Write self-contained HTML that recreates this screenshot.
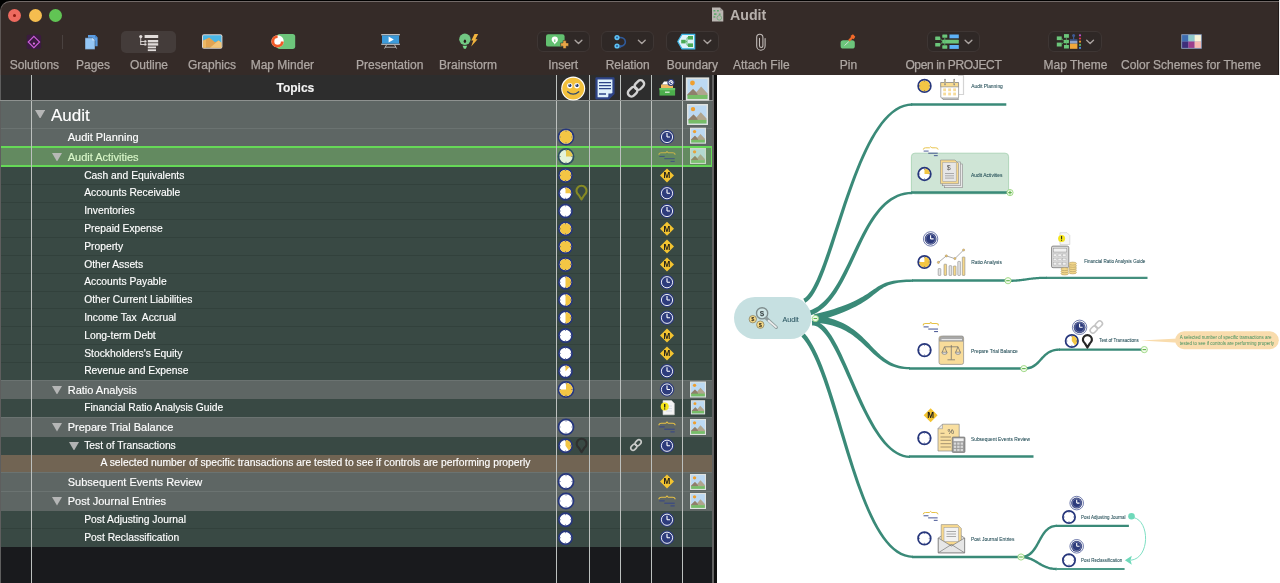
<!DOCTYPE html><html><head><meta charset="utf-8"><style>
*{box-sizing:border-box}
html,body{margin:0;padding:0}
body{width:1280px;height:583px;overflow:hidden;position:relative;background:#352b28;font-family:"Liberation Sans", sans-serif}
.a{position:absolute}
.lbl{position:absolute;top:58.3px;font-size:12px;color:#aea7a3;-webkit-text-stroke:0.25px #aea7a3;white-space:nowrap;line-height:14px}
.row{position:absolute;left:0;width:713px}
.t{position:absolute;white-space:nowrap;color:#fff;line-height:1;-webkit-text-stroke:0.15px currentColor}
.dd{position:absolute;top:31px;height:21px;border:1px solid #3e3634;border-radius:6px;background:#2f2826}

</style></head><body><div class="a" style="left:0;top:0;width:1280px;height:583px;will-change:transform">
<div class="a" style="left:0;top:0;width:1280px;height:75px;background:#000"></div>
<div class="a" style="left:0;top:1px;width:1279px;height:80px;background:#352b28;border-radius:10px 0 0 0;border-top:1px solid #726a68;border-left:1px solid #5f5856"></div>
<div class="a" style="left:1278px;top:2px;width:1px;height:73px;background:#221b19"></div>
<div class="a" style="left:1279px;top:0;width:1px;height:75px;background:#e9e9e9"></div>
<div class="a" style="left:8.0px;top:8.5px;width:13px;height:13px;border-radius:50%;background:#ee6a5f"></div>
<div class="a" style="left:28.5px;top:8.5px;width:13px;height:13px;border-radius:50%;background:#f5bd4f"></div>
<div class="a" style="left:49.0px;top:8.5px;width:13px;height:13px;border-radius:50%;background:#61c454"></div>
<div class="a" style="left:12.5px;top:13.5px;width:3px;height:3px;border-radius:50%;background:#8c1a10"></div>
<div class="t" style="left:730px;top:8.4px;font-size:14.2px;font-weight:bold;color:#b8b1ad;-webkit-text-stroke:0">Audit</div>
<div class="lbl" style="left:9.7px">Solutions</div>
<div class="lbl" style="left:76px">Pages</div>
<div class="lbl" style="left:130px">Outline</div>
<div class="lbl" style="left:188px">Graphics</div>
<div class="lbl" style="left:250.7px">Map Minder</div>
<div class="lbl" style="left:356px">Presentation</div>
<div class="lbl" style="left:439px">Brainstorm</div>
<div class="lbl" style="left:548.2px">Insert</div>
<div class="lbl" style="left:605.7px">Relation</div>
<div class="lbl" style="left:666.7px">Boundary</div>
<div class="lbl" style="left:733px">Attach File</div>
<div class="lbl" style="left:839.8px">Pin</div>
<div class="lbl" style="left:1121px">Color Schemes for Theme</div>
<div class="lbl" style="left:1043.5px">Map Theme</div>
<div class="lbl" style="left:905.4px;letter-spacing:-0.36px">Open in PROJECT</div>
<div class="a" style="left:121px;top:31px;width:55px;height:22px;border-radius:5px;background:#443c3a"></div>
<div class="a" style="left:62px;top:35px;width:1px;height:14px;background:#4a4240"></div>
<div class="dd" style="left:537px;width:53px"></div>
<div class="dd" style="left:600.7px;width:53.0px"></div>
<div class="dd" style="left:666.2px;width:52.5px"></div>
<div class="dd" style="left:927px;width:53.39999999999998px"></div>
<div class="dd" style="left:1048.4px;width:53.5px"></div>
<svg class="a" style="left:0;top:0" width="1280" height="75" viewBox="0 0 1280 75"><path d="M712 7.5H720L723.3 10.8V21.5H712Z" fill="#bcb7b3"/><path d="M720 7.5V10.8H723.3" fill="#9d9894"/><rect x="713.5" y="10" width="1.8" height="1.5" fill="#5ea86a"/><rect x="717" y="10" width="1.8" height="1.5" fill="#5ea86a"/><rect x="714" y="13.3" width="2.5" height="1.6" fill="#5ea86a"/><rect x="718.8" y="13.5" width="1.8" height="1.4" fill="#5ea86a"/><rect x="713.5" y="16.2" width="1.8" height="1.5" fill="#5ea86a"/><circle cx="719.3" cy="17.8" r="2.3" fill="none" stroke="#6aa874" stroke-width="0.8"/><rect x="26.7" y="34.8" width="14.4" height="14.3" rx="1.8" fill="#3b1b40"/><path d="M33.9 36.3L39.6 42L33.9 47.7L28.2 42Z" fill="none" stroke="#cf5fdc" stroke-width="1.1"/><circle cx="33.9" cy="43.6" r="1.1" fill="#e070ea"/><path d="M88 35H95L97.6 37.6V46.3H88Z" fill="#5a9ce2"/><path d="M95 35V37.6H97.6" fill="#3f7cc0"/><path d="M85 37.8H92.2L95 40.6V49.4H85Z" fill="#94c7f6" stroke="#2a2220" stroke-width="0.4"/><path d="M92.2 37.8V40.6H95" fill="#c9e2fa"/><g fill="#e1dcda"><circle cx="140.8" cy="36.6" r="1.6"/><rect x="144.6" y="35" width="13.6" height="3"/><rect x="140.3" y="37" width="0.9" height="7.6"/><rect x="140.3" y="41" width="4" height="0.9"/><rect x="140.3" y="44" width="4" height="0.9"/><circle cx="145.3" cy="41.4" r="1.2"/><circle cx="145.3" cy="44.4" r="1.2"/><rect x="147.8" y="40" width="10.4" height="2.4"/><rect x="147.8" y="43.2" width="10.4" height="2.4"/><rect x="147.8" y="46.5" width="8.2" height="1.8"/><rect x="147.8" y="49.3" width="8.2" height="1.8"/></g><rect x="202" y="34.2" width="20.4" height="14.6" rx="2" fill="#dcd6d4"/><rect x="203" y="35.2" width="18.4" height="12.6" rx="1" fill="#4bb6e6"/><path d="M203 47.8V40.8L209.2 37.6L215 42.2L218.6 40.5L221.4 42.8V47.8Z" fill="#e2a452"/><path d="M210 47.8L218.6 40.5L221.4 42.8V47.8Z" fill="#f2c57a"/><path d="M203 47.8V40.8L206 39.4V47.8Z" fill="#edb865"/><rect x="277" y="34" width="18.2" height="14.9" rx="2.6" fill="#6dc57b"/><circle cx="277.6" cy="41.4" r="6.2" fill="#fff"/><path d="M277.6 35.2A6.2 6.2 0 1 0 283.8 41.4H280.9A3.3 3.3 0 1 1 277.6 38.1Z" fill="#f05a28"/><path d="M277.6 35.2V38.1A3.3 3.3 0 0 1 280.9 41.4H283.8" fill="none"/><rect x="381.2" y="34" width="18.7" height="1.4" fill="#bdbdbd"/><rect x="381.2" y="43.6" width="18.7" height="1.3" fill="#bdbdbd"/><rect x="382" y="35.4" width="17.1" height="8.2" fill="#3c9bdb"/><path d="M388.6 36.6L393.8 39.5L388.6 42.4Z" fill="#fff"/><path d="M386.5 44.9L384.5 48.6M394.6 44.9L396.6 48.6M385.2 47.2H395.9" stroke="#bdbdbd" stroke-width="0.9" fill="none"/><circle cx="464.9" cy="39.3" r="5.7" fill="#72c883"/><ellipse cx="464.9" cy="41.3" rx="1.2" ry="1.7" fill="#2a1a1a"/><path d="M462.6 45.8H467.2L465.9 48.8H463.9Z" fill="#78d88a"/><path d="M474.5 34H478.2L475.4 39.2H477.6L471.2 46.4L473.3 40.6H471.3Z" fill="#f2b43e"/><rect x="546" y="34.3" width="18.6" height="12.3" rx="2.2" fill="#62c070"/><circle cx="554.8" cy="39.6" r="3.1" fill="#fff"/><path d="M553 41.6L554.8 44.6L556.6 41.6Z" fill="#fff"/><rect x="554.3" y="39.4" width="1" height="2.6" fill="#62c070"/><path d="M563 40.6H566.2V42.9H568.6V46.2H566.2V48.6H563V46.2H560.6V42.9H563Z" fill="#e8a546" stroke="#2a2220" stroke-width="0.5"/><path d="M575.1 40.2L578.5 43.4L581.9 40.2" fill="none" stroke="#aaa3a0" stroke-width="1.4" stroke-linecap="round" stroke-linejoin="round"/><path d="M638.4 40.2L641.8 43.4L645.1999999999999 40.2" fill="none" stroke="#aaa3a0" stroke-width="1.4" stroke-linecap="round" stroke-linejoin="round"/><path d="M704.0 40.2L707.4 43.4L710.8 40.2" fill="none" stroke="#aaa3a0" stroke-width="1.4" stroke-linecap="round" stroke-linejoin="round"/><path d="M965.1 40.2L968.5 43.4L971.9 40.2" fill="none" stroke="#aaa3a0" stroke-width="1.4" stroke-linecap="round" stroke-linejoin="round"/><path d="M1086.6999999999998 40.2L1090.1 43.4L1093.5 40.2" fill="none" stroke="#aaa3a0" stroke-width="1.4" stroke-linecap="round" stroke-linejoin="round"/><path d="M619 37.6C626.5 37 627.8 45.5 620.5 46.3" fill="none" stroke="#2f5a9a" stroke-width="1.6"/><path d="M619.2 44.4L622.6 46.2L619.6 48.4Z" fill="#2f5a9a"/><circle cx="617" cy="37.6" r="2.6" fill="#5cc3f4"/><circle cx="617" cy="46" r="2.6" fill="#5cc3f4"/><circle cx="617" cy="37.6" r="1" fill="#2f5a9a"/><circle cx="617" cy="46" r="1" fill="#2f5a9a"/><path d="M682 34.3H694.7V48.8H682L677.8 41.5Z" fill="#dff3fb" stroke="#3fb7e6" stroke-width="1.2"/><rect x="681.2" y="39.8" width="4.5" height="3.6" fill="#4aaa55"/><rect x="688" y="36" width="5" height="3.6" fill="#4aaa55"/><rect x="688" y="43.4" width="5" height="3.6" fill="#4aaa55"/><path d="M685.7 41.6H687V37.8H688M687 41.6V45.2H688" stroke="#4aaa55" stroke-width="0.8" fill="none"/><path d="M759.5 38.2V45.8A1.7 1.7 0 0 0 762.9 45.8V37.3A3.1 3.1 0 0 0 756.7 37.3V46A4.2 4.2 0 0 0 765.1 46V38.5" fill="none" stroke="#c2bcb9" stroke-width="1.1" stroke-linecap="round"/><rect x="840.6" y="40.2" width="14.2" height="8.4" rx="2.6" fill="#6cc57b"/><path d="M844.5 45.5L848.8 41.6" stroke="#e6e6e6" stroke-width="0.8"/><path d="M848.2 40L851.2 36.8L850.4 35.9L853 34.3L855.3 36.7L853.7 39.2L852.8 38.5L849.6 41.5Z" fill="#f26a2a"/><g fill="#6bc67a"><rect x="935.2" y="36.6" width="5" height="3.5" rx="0.5"/><rect x="935.2" y="42.9" width="5" height="3.7" rx="0.5"/><rect x="942.3" y="34.5" width="5" height="3.3" rx="0.5"/><rect x="942.3" y="45.2" width="5" height="3.5" rx="0.5"/><rect x="942.3" y="39.8" width="16.5" height="3.6" rx="0.5"/></g><path d="M940.2 38.4L942.6 41.6L940.2 44.8M944.8 37.8V45.2" stroke="#5ab66a" stroke-width="0.8" fill="none"/><rect x="949.5" y="34.5" width="9.3" height="3.8" fill="#5db2f6"/><rect x="949.5" y="45" width="9.3" height="3.9" fill="#5db2f6"/><g fill="#6bc67a"><rect x="1056.8" y="36.4" width="4.9" height="3.7"/><rect x="1056.8" y="42.6" width="4.9" height="3.9"/><rect x="1064" y="34.1" width="4.9" height="3.7"/><rect x="1064" y="39.9" width="4.9" height="3.3"/><rect x="1064" y="45" width="4.9" height="3.5"/></g><path d="M1061.7 38.3L1064 41.6L1061.7 44.5M1066.4 37.8V45" stroke="#5ab66a" stroke-width="0.7" fill="none"/><circle cx="1073.6" cy="35.6" r="1.5" fill="#3d5a94"/><rect x="1073" y="36" width="1.2" height="3.5" fill="#3d5a94"/><rect x="1070" y="39.3" width="7.4" height="1.5" fill="#3d5a94"/><rect x="1070" y="40.8" width="7.4" height="2.9" fill="#8ea3c8"/><rect x="1070" y="43.7" width="7.4" height="5.1" fill="#f0a83c"/><circle cx="1080" cy="35.3" r="1.1" fill="#c34fd2"/><circle cx="1080" cy="38.5" r="1.1" fill="#e0344c"/><circle cx="1080" cy="41.7" r="1.1" fill="#ee9a2c"/><circle cx="1080" cy="44.9" r="1.1" fill="#5ab86a"/><circle cx="1080" cy="47.9" r="1.1" fill="#4a86dc"/><rect x="1181.3" y="34.3" width="20.4" height="14.4" fill="#9bb2d8"/><rect x="1182.1" y="35.1" width="6.3" height="6.4" fill="#3f6db0"/><rect x="1188.37" y="35.1" width="6.3" height="6.4" fill="#8fc9c9"/><rect x="1194.6399999999999" y="35.1" width="6.3" height="6.4" fill="#f8f3d8"/><rect x="1182.1" y="41.5" width="6.3" height="6.4" fill="#3e2f7a"/><rect x="1188.37" y="41.5" width="6.3" height="6.4" fill="#9b3d8c"/><rect x="1194.6399999999999" y="41.5" width="6.3" height="6.4" fill="#f7b8b0"/></svg>
<div class="a" style="left:0;top:75px;width:717px;height:508px;background:#191a1d"></div>
<div class="a" style="left:0;top:75px;width:713px;height:25px;background:#2d2d2d"></div>
<div class="t" style="left:276.5px;top:82.3px;font-size:12px;font-weight:bold;color:#f2f2f2">Topics</div>
<div class="row" style="top:100px;height:27.5px;background:#5e6664"></div>
<div class="row" style="top:100px;height:1px;background:#6b7371"></div>
<div class="t" style="left:51.0px;top:106.57px;font-size:17px;color:#ffffff">Audit</div>
<svg class="a" style="left:35.3px;top:109.65px" width="10.2" height="8.8" viewBox="0 0 10.2 8.8"><path d="M0 0H10.2L5.1 8.8Z" fill="#bdbdbd" opacity="0.92"/></svg>
<div class="row" style="top:127.5px;height:19.0px;background:#5e6664"></div>
<div class="row" style="top:127.5px;height:1px;background:#6b7371"></div>
<div class="t" style="left:67.7px;top:132.26px;font-size:11.0px;color:#ffffff">Audit Planning</div>
<div class="row" style="top:146.5px;height:20.0px;background:#638a60"></div>
<div class="t" style="left:67.7px;top:151.76px;font-size:11.0px;color:#d9f7c9">Audit Activities</div>
<svg class="a" style="left:52px;top:152.50px" width="10" height="8.6" viewBox="0 0 10 8.6"><path d="M0 0H10L5.0 8.6Z" fill="#bdbdbd" opacity="0.92"/></svg>
<div class="row" style="top:166.5px;height:17.80000000000001px;background:#394944"></div>
<div class="t" style="left:84.2px;top:170.54px;font-size:10.3px;color:#ffffff">Cash and Equivalents</div>
<div class="row" style="top:184.3px;height:17.80000000000001px;background:#394944"></div>
<div class="row" style="top:183.8px;height:1px;background:#32413c"></div>
<div class="t" style="left:84.2px;top:188.34px;font-size:10.3px;color:#ffffff">Accounts Receivable</div>
<div class="row" style="top:202.1px;height:17.80000000000001px;background:#394944"></div>
<div class="row" style="top:201.6px;height:1px;background:#32413c"></div>
<div class="t" style="left:84.2px;top:206.14px;font-size:10.3px;color:#ffffff">Inventories</div>
<div class="row" style="top:219.9px;height:17.80000000000001px;background:#394944"></div>
<div class="row" style="top:219.4px;height:1px;background:#32413c"></div>
<div class="t" style="left:84.2px;top:223.94px;font-size:10.3px;color:#ffffff">Prepaid Expense</div>
<div class="row" style="top:237.7px;height:17.80000000000001px;background:#394944"></div>
<div class="row" style="top:237.2px;height:1px;background:#32413c"></div>
<div class="t" style="left:84.2px;top:241.74px;font-size:10.3px;color:#ffffff">Property</div>
<div class="row" style="top:255.5px;height:17.80000000000001px;background:#394944"></div>
<div class="row" style="top:255.0px;height:1px;background:#32413c"></div>
<div class="t" style="left:84.2px;top:259.54px;font-size:10.3px;color:#ffffff">Other Assets</div>
<div class="row" style="top:273.3px;height:17.80000000000001px;background:#394944"></div>
<div class="row" style="top:272.8px;height:1px;background:#32413c"></div>
<div class="t" style="left:84.2px;top:277.34px;font-size:10.3px;color:#ffffff">Accounts Payable</div>
<div class="row" style="top:291.1px;height:17.80000000000001px;background:#394944"></div>
<div class="row" style="top:290.6px;height:1px;background:#32413c"></div>
<div class="t" style="left:84.2px;top:295.14px;font-size:10.3px;color:#ffffff">Other Current Liabilities</div>
<div class="row" style="top:308.9px;height:17.80000000000001px;background:#394944"></div>
<div class="row" style="top:308.4px;height:1px;background:#32413c"></div>
<div class="t" style="left:84.2px;top:312.94px;font-size:10.3px;color:#ffffff">Income Tax&nbsp; Accrual</div>
<div class="row" style="top:326.70000000000005px;height:17.80000000000001px;background:#394944"></div>
<div class="row" style="top:326.20000000000005px;height:1px;background:#32413c"></div>
<div class="t" style="left:84.2px;top:330.74px;font-size:10.3px;color:#ffffff">Long-term Debt</div>
<div class="row" style="top:344.5px;height:17.80000000000001px;background:#394944"></div>
<div class="row" style="top:344.0px;height:1px;background:#32413c"></div>
<div class="t" style="left:84.2px;top:348.54px;font-size:10.3px;color:#ffffff">Stockholders's Equity</div>
<div class="row" style="top:362.3px;height:17.80000000000001px;background:#394944"></div>
<div class="row" style="top:361.8px;height:1px;background:#32413c"></div>
<div class="t" style="left:84.2px;top:366.34px;font-size:10.3px;color:#ffffff">Revenue and Expense</div>
<div class="row" style="top:380px;height:19px;background:#5e6664"></div>
<div class="row" style="top:380px;height:1px;background:#6b7371"></div>
<div class="t" style="left:67.7px;top:384.76px;font-size:11.0px;color:#ffffff">Ratio Analysis</div>
<svg class="a" style="left:52px;top:385.50px" width="10" height="8.6" viewBox="0 0 10 8.6"><path d="M0 0H10L5.0 8.6Z" fill="#bdbdbd" opacity="0.92"/></svg>
<div class="row" style="top:399px;height:18px;background:#394944"></div>
<div class="t" style="left:84.2px;top:403.14px;font-size:10.3px;color:#ffffff">Financial Ratio Analysis Guide</div>
<div class="row" style="top:417px;height:20px;background:#5e6664"></div>
<div class="row" style="top:417px;height:1px;background:#6b7371"></div>
<div class="t" style="left:67.7px;top:422.26px;font-size:11.0px;color:#ffffff">Prepare Trial Balance</div>
<svg class="a" style="left:52px;top:423.00px" width="10" height="8.6" viewBox="0 0 10 8.6"><path d="M0 0H10L5.0 8.6Z" fill="#bdbdbd" opacity="0.92"/></svg>
<div class="row" style="top:437px;height:17.5px;background:#394944"></div>
<div class="t" style="left:84.2px;top:440.89px;font-size:10.3px;color:#ffffff">Test of Transactions</div>
<svg class="a" style="left:68.5px;top:441.75px" width="10" height="8.6" viewBox="0 0 10 8.6"><path d="M0 0H10L5.0 8.6Z" fill="#bdbdbd" opacity="0.92"/></svg>
<div class="row" style="top:454.5px;height:17.5px;background:#716453"></div>
<div class="t" style="left:100.5px;top:458.37px;font-size:10.33px;color:#ffffff">A selected number of specific transactions are tested to see if controls are performing properly</div>
<div class="row" style="top:472px;height:19px;background:#5e6664"></div>
<div class="row" style="top:472px;height:1px;background:#6b7371"></div>
<div class="t" style="left:67.7px;top:476.76px;font-size:11.0px;color:#ffffff">Subsequent Events Review</div>
<div class="row" style="top:491px;height:20px;background:#5e6664"></div>
<div class="row" style="top:491px;height:1px;background:#6b7371"></div>
<div class="t" style="left:67.7px;top:496.26px;font-size:11.0px;color:#ffffff">Post Journal Entries</div>
<svg class="a" style="left:52px;top:497.00px" width="10" height="8.6" viewBox="0 0 10 8.6"><path d="M0 0H10L5.0 8.6Z" fill="#bdbdbd" opacity="0.92"/></svg>
<div class="row" style="top:511px;height:17.5px;background:#394944"></div>
<div class="t" style="left:84.2px;top:514.89px;font-size:10.3px;color:#ffffff">Post Adjusting Journal</div>
<div class="row" style="top:528.5px;height:18.5px;background:#394944"></div>
<div class="row" style="top:528.0px;height:1px;background:#32413c"></div>
<div class="t" style="left:84.2px;top:532.89px;font-size:10.3px;color:#ffffff">Post Reclassification</div>
<div class="a" style="left:0;top:146px;width:713px;height:21px;border:2px solid #66d957;border-left:none"></div>
<div class="a" style="left:31px;top:75px;width:1px;height:508px;background:#bcc0be"></div>
<div class="a" style="left:556px;top:75px;width:1px;height:508px;background:#bcc0be"></div>
<div class="a" style="left:589px;top:75px;width:1px;height:508px;background:#bcc0be"></div>
<div class="a" style="left:620px;top:75px;width:1px;height:508px;background:#bcc0be"></div>
<div class="a" style="left:651px;top:75px;width:1px;height:508px;background:#bcc0be"></div>
<div class="a" style="left:682px;top:75px;width:1px;height:508px;background:#bcc0be"></div>
<div class="a" style="left:712px;top:75px;width:2px;height:508px;background:#626262"></div>
<div class="a" style="left:714px;top:75px;width:3px;height:508px;background:#0f0f0f"></div>
<div class="a" style="left:0;top:75px;width:1px;height:508px;background:#5e5e5e"></div>
<div class="a" style="left:0;top:100px;width:713px;height:1px;background:#8e9290"></div>
<svg class="a" style="left:0;top:0" width="1280" height="583" viewBox="0 0 1280 583"><circle cx="566" cy="137.0" r="7.53" fill="#ffffff" stroke="#27377c" stroke-width="1.75"/><circle cx="566" cy="137.0" r="6.65" fill="#f3c644"/><path d="M566 130.35v1.33M566 143.65v-1.33M559.35 137.0h1.33M572.65 137.0h-1.33" stroke="#27377c" stroke-width="0.8" opacity="0.75"/><circle cx="566" cy="156.5" r="7.53" fill="#e3f3d8" stroke="#2e4f62" stroke-width="1.75"/><path d="M566 156.5V149.85A6.65 6.65 0 0 1 572.65 156.50Z" fill="#e5c84a"/><path d="M566 149.85v1.33M566 163.15v-1.33M559.35 156.5h1.33M572.65 156.5h-1.33" stroke="#2e4f62" stroke-width="0.8" opacity="0.75"/><circle cx="565.5" cy="175.4" r="6.62" fill="#ffffff" stroke="#27377c" stroke-width="1.75"/><circle cx="565.5" cy="175.4" r="5.75" fill="#f3c644"/><path d="M565.5 169.65v1.15M565.5 181.15v-1.15M559.75 175.4h1.15M571.25 175.4h-1.15" stroke="#27377c" stroke-width="0.8" opacity="0.75"/><circle cx="565.5" cy="193.20000000000002" r="6.62" fill="#ffffff" stroke="#27377c" stroke-width="1.75"/><path d="M565.5 193.20000000000002V187.45A5.75 5.75 0 0 1 571.25 193.20Z" fill="#f3c644"/><path d="M565.5 187.45v1.15M565.5 198.95v-1.15M559.75 193.20000000000002h1.15M571.25 193.20000000000002h-1.15" stroke="#27377c" stroke-width="0.8" opacity="0.75"/><circle cx="565.5" cy="211.0" r="6.62" fill="#ffffff" stroke="#27377c" stroke-width="1.75"/><path d="M565.5 205.25v1.15M565.5 216.75v-1.15M559.75 211.0h1.15M571.25 211.0h-1.15" stroke="#27377c" stroke-width="0.8" opacity="0.75"/><circle cx="565.5" cy="228.8" r="6.62" fill="#ffffff" stroke="#27377c" stroke-width="1.75"/><circle cx="565.5" cy="228.8" r="5.75" fill="#f3c644"/><path d="M565.5 223.05v1.15M565.5 234.55v-1.15M559.75 228.8h1.15M571.25 228.8h-1.15" stroke="#27377c" stroke-width="0.8" opacity="0.75"/><circle cx="565.5" cy="246.6" r="6.62" fill="#ffffff" stroke="#27377c" stroke-width="1.75"/><circle cx="565.5" cy="246.6" r="5.75" fill="#f3c644"/><path d="M565.5 240.85v1.15M565.5 252.35v-1.15M559.75 246.6h1.15M571.25 246.6h-1.15" stroke="#27377c" stroke-width="0.8" opacity="0.75"/><circle cx="565.5" cy="264.4" r="6.62" fill="#ffffff" stroke="#27377c" stroke-width="1.75"/><circle cx="565.5" cy="264.4" r="5.75" fill="#f3c644"/><path d="M565.5 258.65v1.15M565.5 270.15v-1.15M559.75 264.4h1.15M571.25 264.4h-1.15" stroke="#27377c" stroke-width="0.8" opacity="0.75"/><circle cx="565.5" cy="282.20000000000005" r="6.62" fill="#ffffff" stroke="#27377c" stroke-width="1.75"/><path d="M565.5 282.20000000000005V276.45A5.75 5.75 0 0 1 565.50 287.95Z" fill="#f3c644"/><path d="M565.5 276.45v1.15M565.5 287.95v-1.15M559.75 282.20000000000005h1.15M571.25 282.20000000000005h-1.15" stroke="#27377c" stroke-width="0.8" opacity="0.75"/><circle cx="565.5" cy="300.0" r="6.62" fill="#ffffff" stroke="#27377c" stroke-width="1.75"/><path d="M565.5 300.0V294.25A5.75 5.75 0 0 1 565.50 305.75Z" fill="#f3c644"/><path d="M565.5 294.25v1.15M565.5 305.75v-1.15M559.75 300.0h1.15M571.25 300.0h-1.15" stroke="#27377c" stroke-width="0.8" opacity="0.75"/><circle cx="565.5" cy="317.79999999999995" r="6.62" fill="#ffffff" stroke="#27377c" stroke-width="1.75"/><path d="M565.5 317.79999999999995V312.05A5.75 5.75 0 0 1 565.50 323.55Z" fill="#f3c644"/><path d="M565.5 312.05v1.15M565.5 323.55v-1.15M559.75 317.79999999999995h1.15M571.25 317.79999999999995h-1.15" stroke="#27377c" stroke-width="0.8" opacity="0.75"/><circle cx="565.5" cy="335.6" r="6.62" fill="#ffffff" stroke="#27377c" stroke-width="1.75"/><path d="M565.5 329.85v1.15M565.5 341.35v-1.15M559.75 335.6h1.15M571.25 335.6h-1.15" stroke="#27377c" stroke-width="0.8" opacity="0.75"/><circle cx="565.5" cy="353.4" r="6.62" fill="#ffffff" stroke="#27377c" stroke-width="1.75"/><path d="M565.5 347.65v1.15M565.5 359.15v-1.15M559.75 353.4h1.15M571.25 353.4h-1.15" stroke="#27377c" stroke-width="0.8" opacity="0.75"/><circle cx="565.5" cy="371.20000000000005" r="6.62" fill="#ffffff" stroke="#27377c" stroke-width="1.75"/><path d="M565.5 371.20000000000005V365.45A5.75 5.75 0 0 1 569.44 367.01Z" fill="#f3c644"/><path d="M565.5 365.45v1.15M565.5 376.95v-1.15M559.75 371.20000000000005h1.15M571.25 371.20000000000005h-1.15" stroke="#27377c" stroke-width="0.8" opacity="0.75"/><circle cx="566" cy="389.5" r="7.53" fill="#ffffff" stroke="#27377c" stroke-width="1.75"/><path d="M566 389.5V382.85A6.65 6.65 0 1 1 559.35 389.50Z" fill="#f3c644"/><path d="M566 382.85v1.33M566 396.15v-1.33M559.35 389.5h1.33M572.65 389.5h-1.33" stroke="#27377c" stroke-width="0.8" opacity="0.75"/><circle cx="566" cy="427.0" r="7.53" fill="#ffffff" stroke="#27377c" stroke-width="1.75"/><path d="M566 420.35v1.33M566 433.65v-1.33M559.35 427.0h1.33M572.65 427.0h-1.33" stroke="#27377c" stroke-width="0.8" opacity="0.75"/><circle cx="565.5" cy="445.75" r="6.62" fill="#ffffff" stroke="#27377c" stroke-width="1.75"/><path d="M565.5 445.75V440.00A5.75 5.75 0 0 1 568.88 450.40Z" fill="#f3c644"/><path d="M565.5 440.00v1.15M565.5 451.50v-1.15M559.75 445.75h1.15M571.25 445.75h-1.15" stroke="#27377c" stroke-width="0.8" opacity="0.75"/><circle cx="566" cy="481.5" r="7.53" fill="#ffffff" stroke="#27377c" stroke-width="1.75"/><path d="M566 474.85v1.33M566 488.15v-1.33M559.35 481.5h1.33M572.65 481.5h-1.33" stroke="#27377c" stroke-width="0.8" opacity="0.75"/><circle cx="566" cy="501.0" r="7.53" fill="#ffffff" stroke="#27377c" stroke-width="1.75"/><path d="M566 494.35v1.33M566 507.65v-1.33M559.35 501.0h1.33M572.65 501.0h-1.33" stroke="#27377c" stroke-width="0.8" opacity="0.75"/><circle cx="565.5" cy="519.75" r="6.62" fill="#ffffff" stroke="#27377c" stroke-width="1.75"/><path d="M565.5 514.00v1.15M565.5 525.50v-1.15M559.75 519.75h1.15M571.25 519.75h-1.15" stroke="#27377c" stroke-width="0.8" opacity="0.75"/><circle cx="565.5" cy="537.75" r="6.62" fill="#ffffff" stroke="#27377c" stroke-width="1.75"/><path d="M565.5 532.00v1.15M565.5 543.50v-1.15M559.75 537.75h1.15M571.25 537.75h-1.15" stroke="#27377c" stroke-width="0.8" opacity="0.75"/><circle cx="667" cy="137.0" r="7.20" fill="#2d3b7c"/><circle cx="667" cy="137.0" r="5.60" fill="none" stroke="#ffffff" stroke-width="0.9"/><path d="M667 137.0V133.04M667 137.0H670.02" stroke="#ffffff" stroke-width="1.1" fill="none"/><g opacity="0.75"><path d="M658.9 154.80Q658.9 152.80 661.40 152.80H665.70L667.00 151.60L668.30 152.80H672.60Q675.10 152.80 675.10 154.80" fill="none" stroke="#e7c144" stroke-width="1.10"/><path d="M659.30 156.40H664.70M664.30 158.70H674.70M670.50 161.40H674.70" stroke="#34448a" stroke-width="1.00" fill="none"/></g><path d="M667 168.4L674 175.4L667 182.4L660 175.4Z" fill="#f4c430"/><text x="667" y="178.35" font-size="8.20" font-weight="bold" text-anchor="middle" fill="#1a1a1a" font-family="Liberation Sans">M</text><circle cx="667" cy="193.20000000000002" r="7.20" fill="#2d3b7c"/><circle cx="667" cy="193.20000000000002" r="5.60" fill="none" stroke="#ffffff" stroke-width="0.9"/><path d="M667 193.20000000000002V189.24M667 193.20000000000002H670.02" stroke="#ffffff" stroke-width="1.1" fill="none"/><circle cx="667" cy="211.0" r="7.20" fill="#2d3b7c"/><circle cx="667" cy="211.0" r="5.60" fill="none" stroke="#ffffff" stroke-width="0.9"/><path d="M667 211.0V207.04M667 211.0H670.02" stroke="#ffffff" stroke-width="1.1" fill="none"/><path d="M667 221.8L674 228.8L667 235.8L660 228.8Z" fill="#f4c430"/><text x="667" y="231.75" font-size="8.20" font-weight="bold" text-anchor="middle" fill="#1a1a1a" font-family="Liberation Sans">M</text><path d="M667 239.6L674 246.6L667 253.6L660 246.6Z" fill="#f4c430"/><text x="667" y="249.55" font-size="8.20" font-weight="bold" text-anchor="middle" fill="#1a1a1a" font-family="Liberation Sans">M</text><path d="M667 257.4L674 264.4L667 271.4L660 264.4Z" fill="#f4c430"/><text x="667" y="267.35" font-size="8.20" font-weight="bold" text-anchor="middle" fill="#1a1a1a" font-family="Liberation Sans">M</text><circle cx="667" cy="282.20000000000005" r="7.20" fill="#2d3b7c"/><circle cx="667" cy="282.20000000000005" r="5.60" fill="none" stroke="#ffffff" stroke-width="0.9"/><path d="M667 282.20000000000005V278.24M667 282.20000000000005H670.02" stroke="#ffffff" stroke-width="1.1" fill="none"/><circle cx="667" cy="300.0" r="7.20" fill="#2d3b7c"/><circle cx="667" cy="300.0" r="5.60" fill="none" stroke="#ffffff" stroke-width="0.9"/><path d="M667 300.0V296.04M667 300.0H670.02" stroke="#ffffff" stroke-width="1.1" fill="none"/><circle cx="667" cy="317.79999999999995" r="7.20" fill="#2d3b7c"/><circle cx="667" cy="317.79999999999995" r="5.60" fill="none" stroke="#ffffff" stroke-width="0.9"/><path d="M667 317.79999999999995V313.84M667 317.79999999999995H670.02" stroke="#ffffff" stroke-width="1.1" fill="none"/><path d="M667 328.6L674 335.6L667 342.6L660 335.6Z" fill="#f4c430"/><text x="667" y="338.55" font-size="8.20" font-weight="bold" text-anchor="middle" fill="#1a1a1a" font-family="Liberation Sans">M</text><path d="M667 346.4L674 353.4L667 360.4L660 353.4Z" fill="#f4c430"/><text x="667" y="356.35" font-size="8.20" font-weight="bold" text-anchor="middle" fill="#1a1a1a" font-family="Liberation Sans">M</text><circle cx="667" cy="371.20000000000005" r="7.20" fill="#2d3b7c"/><circle cx="667" cy="371.20000000000005" r="5.60" fill="none" stroke="#ffffff" stroke-width="0.9"/><path d="M667 371.20000000000005V367.24M667 371.20000000000005H670.02" stroke="#ffffff" stroke-width="1.1" fill="none"/><circle cx="667" cy="389.5" r="7.20" fill="#2d3b7c"/><circle cx="667" cy="389.5" r="5.60" fill="none" stroke="#ffffff" stroke-width="0.9"/><path d="M667 389.5V385.54M667 389.5H670.02" stroke="#ffffff" stroke-width="1.1" fill="none"/><path d="M663 400.6H671.5L674.3 403.4V414.8H663Z" fill="#f4f4f4" stroke="#d0d0d0" stroke-width="0.6"/><path d="M666 406.0H672M666 408.5H672M666 411.0H672" stroke="#c8d0e0" stroke-width="0.6"/><circle cx="664.7" cy="406.6" r="4" fill="#f6e51a"/><path d="M664.7 404.0V407.6" stroke="#222" stroke-width="1.3"/><circle cx="664.7" cy="408.9" r="0.7" fill="#222"/><g opacity="1"><path d="M658.9 425.30Q658.9 423.30 661.40 423.30H665.70L667.00 422.10L668.30 423.30H672.60Q675.10 423.30 675.10 425.30" fill="none" stroke="#e7c144" stroke-width="1.10"/><path d="M659.30 426.90H664.70M664.30 429.20H674.70M670.50 431.90H674.70" stroke="#34448a" stroke-width="1.00" fill="none"/></g><circle cx="667" cy="445.75" r="7.20" fill="#2d3b7c"/><circle cx="667" cy="445.75" r="5.60" fill="none" stroke="#ffffff" stroke-width="0.9"/><path d="M667 445.75V441.79M667 445.75H670.02" stroke="#ffffff" stroke-width="1.1" fill="none"/><path d="M667 474.5L674 481.5L667 488.5L660 481.5Z" fill="#f4c430"/><text x="667" y="484.45" font-size="8.20" font-weight="bold" text-anchor="middle" fill="#1a1a1a" font-family="Liberation Sans">M</text><g opacity="1"><path d="M658.9 499.30Q658.9 497.30 661.40 497.30H665.70L667.00 496.10L668.30 497.30H672.60Q675.10 497.30 675.10 499.30" fill="none" stroke="#e7c144" stroke-width="1.10"/><path d="M659.30 500.90H664.70M664.30 503.20H674.70M670.50 505.90H674.70" stroke="#34448a" stroke-width="1.00" fill="none"/></g><circle cx="667" cy="519.75" r="7.20" fill="#2d3b7c"/><circle cx="667" cy="519.75" r="5.60" fill="none" stroke="#ffffff" stroke-width="0.9"/><path d="M667 519.75V515.79M667 519.75H670.02" stroke="#ffffff" stroke-width="1.1" fill="none"/><circle cx="667" cy="537.75" r="7.20" fill="#2d3b7c"/><circle cx="667" cy="537.75" r="5.60" fill="none" stroke="#ffffff" stroke-width="0.9"/><path d="M667 537.75V533.79M667 537.75H670.02" stroke="#ffffff" stroke-width="1.1" fill="none"/><rect x="687" y="104" width="21" height="21" fill="#dfe2df"/><rect x="688.47" y="105.47" width="18.06" height="18.06" fill="#bcd9f2"/><circle cx="692.99" cy="109.08" r="2.17" fill="#ef9f2f"/><path d="M688.47 119.56L693.53 114.50L696.60 117.21L700.75 112.33L706.53 118.47V120.28H688.47Z" fill="#b0a58f"/><path d="M688.47 119.56L693.53 114.50L697.50 119.02V120.28H688.47Z" fill="#8f7f6c"/><rect x="688.47" y="119.92" width="18.06" height="3.61" fill="#77bd67"/><rect x="690" y="127.7" width="16" height="16" fill="#dfe2df"/><rect x="691.12" y="128.82" width="13.76" height="13.76" fill="#bcd9f2"/><circle cx="694.56" cy="131.57" r="1.65" fill="#ef9f2f"/><path d="M691.12 139.55L694.97 135.70L697.31 137.76L700.48 134.05L704.88 138.73V140.10H691.12Z" fill="#b0a58f"/><path d="M691.12 139.55L694.97 135.70L698.00 139.14V140.10H691.12Z" fill="#8f7f6c"/><rect x="691.12" y="139.83" width="13.76" height="2.75" fill="#77bd67"/><rect x="690" y="148" width="16" height="16" fill="#c9d9c5"/><rect x="691.12" y="149.12" width="13.76" height="13.76" fill="#b3d8cf"/><circle cx="694.56" cy="151.87" r="1.65" fill="#e6a33a"/><path d="M691.12 159.85L694.97 156.00L697.31 158.06L700.48 154.35L704.88 159.03V160.40H691.12Z" fill="#a6ab8a"/><path d="M691.12 159.85L694.97 156.00L698.00 159.44V160.40H691.12Z" fill="#8d8a67"/><rect x="691.12" y="160.13" width="13.76" height="2.75" fill="#7cc070"/><rect x="690" y="381.5" width="16" height="16" fill="#dfe2df"/><rect x="691.12" y="382.62" width="13.76" height="13.76" fill="#bcd9f2"/><circle cx="694.56" cy="385.37" r="1.65" fill="#ef9f2f"/><path d="M691.12 393.35L694.97 389.50L697.31 391.56L700.48 387.85L704.88 392.53V393.90H691.12Z" fill="#b0a58f"/><path d="M691.12 393.35L694.97 389.50L698.00 392.94V393.90H691.12Z" fill="#8f7f6c"/><rect x="691.12" y="393.63" width="13.76" height="2.75" fill="#77bd67"/><rect x="690.9" y="400.2" width="14.2" height="14.2" fill="#dfe2df"/><rect x="691.90" y="401.20" width="12.20" height="12.20" fill="#bcd9f2"/><circle cx="694.95" cy="403.64" r="1.46" fill="#ef9f2f"/><path d="M691.90 410.72L695.32 407.30L697.39 409.13L700.20 405.84L704.10 409.98V411.20H691.90Z" fill="#b0a58f"/><path d="M691.90 410.72L695.32 407.30L698.00 410.35V411.20H691.90Z" fill="#8f7f6c"/><rect x="691.90" y="410.96" width="12.20" height="2.44" fill="#77bd67"/><rect x="690" y="419" width="16" height="16" fill="#dfe2df"/><rect x="691.12" y="420.12" width="13.76" height="13.76" fill="#bcd9f2"/><circle cx="694.56" cy="422.87" r="1.65" fill="#ef9f2f"/><path d="M691.12 430.85L694.97 427.00L697.31 429.06L700.48 425.35L704.88 430.03V431.40H691.12Z" fill="#b0a58f"/><path d="M691.12 430.85L694.97 427.00L698.00 430.44V431.40H691.12Z" fill="#8f7f6c"/><rect x="691.12" y="431.13" width="13.76" height="2.75" fill="#77bd67"/><rect x="690" y="474" width="16" height="16" fill="#dfe2df"/><rect x="691.12" y="475.12" width="13.76" height="13.76" fill="#bcd9f2"/><circle cx="694.56" cy="477.87" r="1.65" fill="#ef9f2f"/><path d="M691.12 485.85L694.97 482.00L697.31 484.06L700.48 480.35L704.88 485.03V486.40H691.12Z" fill="#b0a58f"/><path d="M691.12 485.85L694.97 482.00L698.00 485.44V486.40H691.12Z" fill="#8f7f6c"/><rect x="691.12" y="486.13" width="13.76" height="2.75" fill="#77bd67"/><rect x="690" y="493" width="16" height="16" fill="#dfe2df"/><rect x="691.12" y="494.12" width="13.76" height="13.76" fill="#bcd9f2"/><circle cx="694.56" cy="496.87" r="1.65" fill="#ef9f2f"/><path d="M691.12 504.85L694.97 501.00L697.31 503.06L700.48 499.35L704.88 504.03V505.40H691.12Z" fill="#b0a58f"/><path d="M691.12 504.85L694.97 501.00L698.00 504.44V505.40H691.12Z" fill="#8f7f6c"/><rect x="691.12" y="505.13" width="13.76" height="2.75" fill="#77bd67"/><path d="M581.5 199.46L578.72 195.02A5.05 5.05 0 1 1 584.28 195.02Z" fill="none" stroke="#878a24" stroke-width="2.1" stroke-linejoin="round"/><path d="M581.6 452.22L578.88 447.83A4.95 4.95 0 1 1 584.32 447.83Z" fill="none" stroke="#2f302f" stroke-width="2.1" stroke-linejoin="round"/><g transform="translate(636 445) rotate(-45) scale(0.65)"><rect x="-10" y="-3.6" width="10.5" height="7.2" rx="3.6" fill="none" stroke="#c9cbc9" stroke-width="2.60"/><rect x="-0.5" y="-3.6" width="10.5" height="7.2" rx="3.6" fill="none" stroke="#c9cbc9" stroke-width="2.60"/></g><circle cx="573.2" cy="88.6" r="12" fill="#ffffff"/><circle cx="573.2" cy="88.6" r="10.9" fill="#f2c03c"/><circle cx="569.8" cy="85.7" r="2.7" fill="#fff"/><circle cx="576.9" cy="85.7" r="2.7" fill="#fff"/><circle cx="569.9" cy="85.4" r="1.6" fill="#23386e"/><circle cx="577" cy="85.4" r="1.6" fill="#23386e"/><circle cx="569.4" cy="84.8" r="0.5" fill="#fff"/><circle cx="576.5" cy="84.8" r="0.5" fill="#fff"/><path d="M567.6 91.8Q573.2 96.6 578.8 91.8" fill="none" stroke="#2f4a70" stroke-width="1.3" stroke-linecap="round"/><path d="M596.5 78.4H613.5V93.4L608.4 98.4H596.5Z" fill="#dff1fb" stroke="#2e4488" stroke-width="2.2" stroke-linejoin="round"/><path d="M613.5 93.4H608.4V98.4Z" fill="#2e4488"/><path d="M599 82.6H611M599 85.6H611M599 88.6H611M599 94H606" stroke="#2e4488" stroke-width="1.3"/><g transform="translate(636 88.4) rotate(-45) scale(1.0)"><rect x="-10" y="-3.6" width="10.5" height="7.2" rx="3.6" fill="none" stroke="#d2d2d2" stroke-width="2.40"/><rect x="-0.5" y="-3.6" width="10.5" height="7.2" rx="3.6" fill="none" stroke="#d2d2d2" stroke-width="2.40"/></g><rect x="659.5" y="88" width="15.6" height="7.6" fill="#4cae4c"/><rect x="659.5" y="88" width="15.6" height="2.2" fill="#6cc86a"/><rect x="665" y="91.6" width="4.6" height="1.2" fill="#e8f4e4"/><rect x="661" y="84.5" width="12" height="3.5" fill="#f0b860"/><path d="M662 84.5L664 81.5H670L671 84.5Z" fill="#ffffff"/><circle cx="671" cy="82.5" r="3.60" fill="#2d3b7c"/><circle cx="671" cy="82.5" r="2.00" fill="none" stroke="#ffffff" stroke-width="0.9"/><path d="M671 82.5V80.52M671 82.5H672.51" stroke="#ffffff" stroke-width="1.1" fill="none"/><rect x="685.8" y="77.4" width="23.4" height="23.2" fill="#dfe2df"/><rect x="687.44" y="79.04" width="20.12" height="19.92" fill="#bcd9f2"/><circle cx="692.47" cy="83.02" r="2.41" fill="#ef9f2f"/><path d="M687.44 94.58L693.07 89.00L696.49 91.99L701.12 86.61L707.56 93.38V95.38H687.44Z" fill="#b0a58f"/><path d="M687.44 94.58L693.07 89.00L697.50 93.98V95.38H687.44Z" fill="#8f7f6c"/><rect x="687.44" y="94.98" width="20.12" height="3.98" fill="#77bd67"/></svg>
<svg class="a" style="left:717px;top:75px;will-change:transform" width="563" height="508" viewBox="717 75 563 508"><rect x="717" y="75" width="563" height="508" fill="#fff"/><rect x="911.4" y="153.2" width="97.2" height="40.6" rx="3.5" fill="#cfe5d6" stroke="#a9d3b4" stroke-width="0.9"/><path d="M805.30 302.66L807.73 300.97L810.01 298.74L812.19 296.00L814.30 292.77L816.38 289.08L818.44 284.96L820.48 280.42L822.53 275.50L824.58 270.22L826.64 264.62L828.71 258.72L830.80 252.57L832.92 246.18L835.06 239.59L837.23 232.84L839.44 225.96L841.69 218.97L843.98 211.92L846.32 204.83L848.71 197.73L851.15 190.67L853.65 183.67L856.22 176.76L858.85 169.98L861.55 163.36L864.32 156.94L867.17 150.74L870.10 144.81L873.11 139.16L876.20 133.85L879.39 128.89L882.66 124.32L886.03 120.18L889.49 116.50L893.04 113.31L896.69 110.64L900.43 108.51L904.27 106.95L908.23 105.99L912.30 105.65L912.30 103.35L907.86 103.68L903.55 104.69L899.39 106.34L895.36 108.58L891.48 111.38L887.73 114.69L884.10 118.49L880.60 122.74L877.21 127.40L873.92 132.44L870.73 137.83L867.64 143.54L864.64 149.53L861.72 155.78L858.88 162.24L856.12 168.89L853.44 175.70L850.82 182.63L848.26 189.65L845.77 196.72L843.33 203.82L840.94 210.92L838.60 217.97L836.31 224.94L834.05 231.81L831.83 238.54L829.65 245.09L827.49 251.44L825.36 257.55L823.25 263.38L821.16 268.91L819.08 274.09L817.02 278.90L814.97 283.29L812.94 287.23L810.91 290.68L808.91 293.60L806.96 295.94L805.07 297.67L803.30 298.74Z" fill="#3a8a78"/><path d="M810.80 315.37L814.21 313.91L817.46 312.15L820.55 310.10L823.48 307.77L826.28 305.18L828.94 302.36L831.49 299.32L833.94 296.08L836.29 292.67L838.56 289.09L840.75 285.36L842.89 281.51L844.97 277.54L847.01 273.49L849.02 269.35L851.00 265.16L852.96 260.94L854.92 256.69L856.87 252.43L858.84 248.19L860.82 243.98L862.83 239.83L864.87 235.74L866.95 231.74L869.08 227.84L871.27 224.07L873.53 220.44L875.86 216.97L878.26 213.68L880.76 210.59L883.35 207.71L886.04 205.06L888.84 202.66L891.76 200.53L894.81 198.67L897.99 197.11L901.31 195.86L904.80 194.94L908.46 194.36L912.30 194.15L912.30 191.85L908.23 192.03L904.32 192.59L900.59 193.53L897.01 194.82L893.60 196.43L890.33 198.36L887.21 200.58L884.23 203.07L881.38 205.80L878.64 208.77L876.02 211.94L873.49 215.30L871.06 218.83L868.71 222.51L866.43 226.33L864.21 230.26L862.05 234.28L859.94 238.39L857.87 242.55L855.82 246.76L853.80 250.99L851.79 255.22L849.78 259.44L847.77 263.63L845.74 267.76L843.70 271.82L841.63 275.80L839.53 279.66L837.38 283.40L835.18 286.98L832.93 290.41L830.61 293.64L828.23 296.67L825.77 299.48L823.23 302.05L820.62 304.35L817.91 306.38L815.11 308.12L812.22 309.55L809.20 310.63Z" fill="#3a8a78"/><path d="M815.96 321.63L821.32 319.96L826.34 318.38L831.04 316.82L835.43 315.28L839.51 313.76L843.30 312.25L846.83 310.77L850.10 309.30L853.13 307.85L855.94 306.43L858.54 305.02L860.94 303.65L863.17 302.29L865.23 300.97L867.14 299.68L868.92 298.42L870.57 297.20L872.13 296.01L873.59 294.87L874.98 293.77L876.31 292.71L877.60 291.70L878.86 290.74L880.11 289.83L881.37 288.96L882.65 288.14L883.97 287.37L885.35 286.64L886.82 285.96L888.37 285.32L890.04 284.73L891.85 284.19L893.80 283.70L895.92 283.26L898.23 282.87L900.72 282.55L903.44 282.28L906.38 282.07L909.56 281.93L913.00 281.85L913.00 279.55L909.51 279.54L906.27 279.59L903.26 279.71L900.47 279.89L897.87 280.13L895.46 280.44L893.21 280.80L891.11 281.23L889.15 281.71L887.30 282.25L885.57 282.85L883.92 283.51L882.35 284.21L880.85 284.97L879.40 285.76L877.98 286.60L876.59 287.48L875.21 288.40L873.83 289.34L872.42 290.32L870.97 291.32L869.47 292.35L867.90 293.40L866.23 294.48L864.47 295.59L862.58 296.72L860.56 297.87L858.38 299.05L856.02 300.25L853.48 301.47L850.74 302.71L847.77 303.97L844.56 305.25L841.10 306.54L837.37 307.85L833.35 309.16L829.02 310.48L824.38 311.80L819.40 313.12L814.04 314.37Z" fill="#3a8a78"/><path d="M814.68 322.74L818.58 322.95L822.28 323.38L825.79 323.95L829.12 324.65L832.28 325.47L835.28 326.40L838.13 327.44L840.85 328.56L843.44 329.78L845.92 331.07L848.28 332.44L850.55 333.87L852.73 335.37L854.83 336.92L856.85 338.51L858.82 340.14L860.73 341.80L862.60 343.49L864.42 345.19L866.23 346.90L868.01 348.60L869.78 350.30L871.55 351.98L873.33 353.64L875.13 355.26L876.95 356.84L878.80 358.36L880.70 359.83L882.66 361.22L884.67 362.54L886.76 363.77L888.92 364.90L891.18 365.92L893.52 366.82L895.97 367.60L898.53 368.25L901.20 368.75L904.00 369.11L906.93 369.31L910.00 369.35L910.00 367.05L907.06 366.92L904.28 366.64L901.64 366.22L899.15 365.65L896.78 364.96L894.52 364.14L892.37 363.21L890.32 362.18L888.34 361.04L886.44 359.82L884.61 358.50L882.82 357.11L881.08 355.64L879.36 354.10L877.68 352.50L876.00 350.85L874.34 349.15L872.66 347.42L870.98 345.65L869.26 343.85L867.52 342.04L865.73 340.22L863.89 338.40L861.99 336.59L860.01 334.79L857.96 333.01L855.80 331.26L853.55 329.56L851.19 327.90L848.70 326.30L846.09 324.76L843.34 323.31L840.43 321.93L837.38 320.65L834.16 319.47L830.77 318.40L827.19 317.45L823.43 316.62L819.48 315.90L815.32 315.26Z" fill="#3a8a78"/><path d="M812.10 325.50L813.86 325.52L815.68 325.98L817.59 326.87L819.56 328.20L821.58 329.96L823.64 332.13L825.72 334.69L827.81 337.60L829.90 340.84L832.00 344.38L834.10 348.19L836.20 352.23L838.32 356.50L840.44 360.95L842.58 365.56L844.73 370.31L846.90 375.17L849.09 380.11L851.30 385.10L853.54 390.13L855.81 395.16L858.12 400.18L860.46 405.15L862.85 410.05L865.28 414.85L867.75 419.53L870.28 424.06L872.87 428.43L875.52 432.59L878.23 436.54L881.01 440.23L883.87 443.66L886.80 446.78L889.82 449.58L892.94 452.03L896.15 454.10L899.46 455.76L902.87 456.97L906.39 457.71L910.00 457.95L910.00 455.65L906.73 455.39L903.54 454.67L900.44 453.52L897.40 451.94L894.43 449.97L891.52 447.63L888.68 444.92L885.89 441.89L883.17 438.54L880.51 434.92L877.90 431.04L875.35 426.93L872.85 422.61L870.40 418.11L868.00 413.46L865.64 408.68L863.32 403.79L861.05 398.83L858.80 393.82L856.59 388.78L854.41 383.74L852.25 378.72L850.12 373.76L848.00 368.86L845.90 364.07L843.81 359.40L841.72 354.87L839.64 350.52L837.56 346.37L835.47 342.44L833.36 338.75L831.24 335.32L829.09 332.18L826.91 329.36L824.67 326.86L822.35 324.72L819.94 322.96L817.40 321.64L814.71 320.80L811.90 320.50Z" fill="#3a8a78"/><path d="M801.39 336.50L803.97 339.44L806.51 342.95L809.01 346.96L811.48 351.46L813.92 356.39L816.32 361.72L818.69 367.43L821.04 373.47L823.36 379.82L825.67 386.45L827.96 393.31L830.25 400.39L832.53 407.64L834.82 415.04L837.11 422.55L839.42 430.15L841.74 437.81L844.09 445.48L846.46 453.15L848.87 460.78L851.32 468.34L853.81 475.80L856.35 483.13L858.95 490.30L861.60 497.28L864.32 504.03L867.12 510.53L869.99 516.75L872.94 522.65L875.99 528.21L879.13 533.40L882.37 538.18L885.73 542.53L889.20 546.41L892.81 549.79L896.55 552.64L900.44 554.92L904.48 556.59L908.67 557.61L913.00 557.95L913.00 555.65L909.05 555.31L905.23 554.34L901.53 552.77L897.93 550.61L894.43 547.90L891.02 544.65L887.71 540.90L884.49 536.66L881.36 531.98L878.32 526.88L875.36 521.40L872.48 515.56L869.68 509.40L866.95 502.95L864.29 496.23L861.70 489.29L859.16 482.15L856.67 474.84L854.23 467.40L851.83 459.85L849.48 452.22L847.15 444.55L844.85 436.87L842.57 429.21L840.31 421.59L838.07 414.05L835.82 406.62L833.58 399.34L831.34 392.22L829.08 385.30L826.81 378.61L824.52 372.18L822.21 366.04L819.86 360.22L817.46 354.74L815.03 349.65L812.53 344.95L809.97 340.68L807.33 336.86L804.61 333.50Z" fill="#3a8a78"/><path d="M911 104.5H1006.3" stroke="#3a8a78" stroke-width="2.5"/><path d="M911 192.6H1009" stroke="#3a8a78" stroke-width="2.5"/><path d="M912 280.6H1008" stroke="#3a8a78" stroke-width="2.5"/><path d="M909 368.4H1023.9" stroke="#3a8a78" stroke-width="2.5"/><path d="M909 456.6H1033.5" stroke="#3a8a78" stroke-width="2.5"/><path d="M912 557H1021" stroke="#3a8a78" stroke-width="2.5"/><path d="M1008.00 282.00L1009.26 281.99L1010.47 281.97L1011.63 281.94L1012.75 281.90L1013.83 281.85L1014.87 281.79L1015.88 281.72L1016.85 281.65L1017.79 281.57L1018.70 281.49L1019.59 281.40L1020.46 281.30L1021.30 281.20L1022.13 281.10L1022.95 280.99L1023.75 280.88L1024.55 280.77L1025.34 280.66L1026.13 280.54L1026.91 280.43L1027.70 280.31L1028.49 280.20L1029.29 280.09L1030.11 279.98L1030.93 279.87L1031.78 279.76L1032.64 279.66L1033.53 279.56L1034.44 279.47L1035.38 279.38L1036.35 279.30L1037.36 279.22L1038.40 279.15L1039.49 279.09L1040.61 279.04L1041.79 278.99L1043.01 278.95L1044.28 278.93L1045.61 278.91L1047.00 278.90L1047.00 276.70L1045.60 276.70L1044.25 276.72L1042.95 276.74L1041.71 276.78L1040.52 276.82L1039.37 276.87L1038.27 276.93L1037.20 277.00L1036.18 277.07L1035.18 277.15L1034.22 277.24L1033.29 277.33L1032.39 277.43L1031.51 277.53L1030.65 277.63L1029.81 277.74L1028.99 277.84L1028.18 277.95L1027.38 278.06L1026.59 278.17L1025.80 278.28L1025.02 278.39L1024.23 278.50L1023.45 278.61L1022.65 278.71L1021.85 278.81L1021.03 278.91L1020.20 279.00L1019.35 279.09L1018.48 279.17L1017.59 279.25L1016.67 279.32L1015.72 279.39L1014.74 279.45L1013.72 279.50L1012.67 279.54L1011.57 279.57L1010.43 279.59L1009.24 279.60L1008.00 279.60Z" fill="#3a8a78"/><path d="M1046 277.8H1147.5" stroke="#3a8a78" stroke-width="2.3" opacity="0.95"/><path d="M1023.90 369.90L1025.29 369.85L1026.61 369.74L1027.87 369.55L1029.06 369.30L1030.19 368.99L1031.27 368.63L1032.29 368.21L1033.26 367.74L1034.18 367.22L1035.05 366.67L1035.89 366.08L1036.68 365.46L1037.44 364.81L1038.16 364.14L1038.87 363.46L1039.55 362.76L1040.21 362.05L1040.86 361.34L1041.50 360.62L1042.14 359.91L1042.77 359.20L1043.41 358.50L1044.05 357.81L1044.71 357.13L1045.38 356.48L1046.07 355.84L1046.78 355.23L1047.52 354.65L1048.28 354.09L1049.08 353.57L1049.92 353.09L1050.80 352.64L1051.73 352.23L1052.72 351.86L1053.76 351.54L1054.86 351.27L1056.03 351.05L1057.28 350.89L1058.60 350.79L1060.00 350.75L1060.00 348.45L1058.48 348.48L1057.04 348.59L1055.68 348.76L1054.38 349.00L1053.14 349.29L1051.97 349.65L1050.86 350.06L1049.80 350.52L1048.80 351.02L1047.85 351.56L1046.95 352.15L1046.09 352.76L1045.27 353.40L1044.49 354.06L1043.74 354.75L1043.02 355.44L1042.32 356.15L1041.65 356.86L1040.99 357.58L1040.34 358.29L1039.70 359.00L1039.06 359.70L1038.43 360.39L1037.79 361.07L1037.14 361.72L1036.48 362.35L1035.81 362.96L1035.12 363.54L1034.41 364.08L1033.67 364.60L1032.91 365.07L1032.11 365.51L1031.27 365.91L1030.39 366.26L1029.46 366.57L1028.48 366.83L1027.43 367.04L1026.33 367.19L1025.15 367.28L1023.90 367.30Z" fill="#3a8a78"/><path d="M1059 349.6H1144.3" stroke="#3a8a78" stroke-width="2.3"/><path d="M1021.00 558.30L1022.49 558.23L1023.92 558.04L1025.27 557.73L1026.55 557.32L1027.76 556.80L1028.91 556.19L1029.99 555.50L1031.01 554.73L1031.96 553.88L1032.87 552.98L1033.73 552.02L1034.54 551.02L1035.31 549.97L1036.06 548.89L1036.77 547.78L1037.46 546.64L1038.13 545.49L1038.78 544.32L1039.42 543.15L1040.06 541.98L1040.69 540.81L1041.33 539.65L1041.97 538.51L1042.62 537.39L1043.28 536.30L1043.96 535.25L1044.65 534.23L1045.37 533.27L1046.11 532.35L1046.88 531.49L1047.69 530.69L1048.52 529.95L1049.40 529.29L1050.31 528.70L1051.28 528.19L1052.29 527.76L1053.36 527.42L1054.50 527.16L1055.71 527.01L1057.00 526.95L1057.00 524.65L1055.52 524.71L1054.10 524.89L1052.76 525.18L1051.49 525.58L1050.28 526.09L1049.14 526.69L1048.06 527.37L1047.04 528.14L1046.09 528.97L1045.18 529.86L1044.32 530.81L1043.50 531.81L1042.72 532.85L1041.98 533.93L1041.26 535.04L1040.57 536.17L1039.89 537.32L1039.23 538.48L1038.58 539.65L1037.94 540.82L1037.30 541.99L1036.66 543.14L1036.01 544.28L1035.36 545.39L1034.69 546.48L1034.01 547.53L1033.31 548.54L1032.59 549.50L1031.84 550.41L1031.07 551.27L1030.26 552.06L1029.43 552.78L1028.55 553.44L1027.64 554.02L1026.68 554.52L1025.67 554.93L1024.61 555.27L1023.48 555.51L1022.28 555.66L1021.00 555.70Z" fill="#3a8a78"/><path d="M1056 525.8H1128.9" stroke="#3a8a78" stroke-width="2.3"/><path d="M1021.00 558.30L1022.05 558.31L1023.07 558.36L1024.04 558.46L1024.99 558.59L1025.90 558.75L1026.78 558.95L1027.64 559.18L1028.48 559.44L1029.29 559.72L1030.09 560.03L1030.88 560.36L1031.65 560.71L1032.41 561.08L1033.16 561.46L1033.91 561.87L1034.65 562.28L1035.39 562.71L1036.13 563.15L1036.88 563.59L1037.63 564.04L1038.39 564.48L1039.15 564.93L1039.93 565.38L1040.73 565.82L1041.54 566.26L1042.36 566.68L1043.21 567.09L1044.08 567.49L1044.98 567.87L1045.90 568.23L1046.85 568.56L1047.83 568.87L1048.84 569.16L1049.89 569.41L1050.97 569.63L1052.10 569.81L1053.26 569.96L1054.46 570.07L1055.71 570.13L1057.00 570.15L1057.00 567.85L1055.79 567.83L1054.63 567.76L1053.51 567.66L1052.44 567.52L1051.40 567.34L1050.40 567.13L1049.44 566.90L1048.51 566.63L1047.60 566.34L1046.73 566.02L1045.87 565.68L1045.04 565.33L1044.23 564.95L1043.43 564.56L1042.65 564.15L1041.88 563.73L1041.12 563.30L1040.37 562.86L1039.62 562.41L1038.87 561.96L1038.12 561.51L1037.38 561.06L1036.62 560.61L1035.86 560.16L1035.09 559.73L1034.31 559.30L1033.52 558.88L1032.71 558.48L1031.88 558.09L1031.03 557.72L1030.16 557.38L1029.27 557.06L1028.34 556.77L1027.39 556.51L1026.41 556.28L1025.40 556.08L1024.36 555.93L1023.27 555.81L1022.16 555.73L1021.00 555.70Z" fill="#3a8a78"/><path d="M1056 569H1124.6" stroke="#4d9a88" stroke-width="2.2"/><rect x="734" y="297" width="77.4" height="42" rx="21" fill="#c6e0e1"/><circle cx="762.1" cy="313.3" r="5.6" fill="#cfe6e6" stroke="#7f8d8d" stroke-width="1.4"/><path d="M766.3 318.3L776.3 327.4" stroke="#8d9c9c" stroke-width="3.2" stroke-linecap="round"/><path d="M768.6 320.7L776 327.1" stroke="#ececec" stroke-width="1.8" stroke-linecap="round"/><text x="762.1" y="316.4" font-size="8" text-anchor="middle" fill="#3f4a4a" font-family="Liberation Sans" font-weight="bold">$</text><circle cx="752.8" cy="319.2" r="3.7" fill="#f6da86" stroke="#8c8466" stroke-width="0.8"/><text x="752.8" y="321.3" font-size="5.6" text-anchor="middle" fill="#2a2418" font-weight="bold" font-family="Liberation Sans">$</text><circle cx="760.3" cy="324.7" r="3.7" fill="#f6da86" stroke="#8c8466" stroke-width="0.8"/><text x="760.3" y="326.8" font-size="5.6" text-anchor="middle" fill="#2a2418" font-weight="bold" font-family="Liberation Sans">$</text><text x="782.4" y="322.04" font-size="7.2" fill="#2a5560" stroke="#2a5560" stroke-width="0.06" font-family="Liberation Sans">Audit</text><circle cx="815.4" cy="318.5" r="3.1" fill="#f4fbef" stroke="#9ad77f" stroke-width="0.9"/><path d="M813.6 318.5H817.1999999999999" stroke="#5fb34a" stroke-width="1.1"/><circle cx="924.5" cy="85.9" r="6.33" fill="#ffffff" stroke="#27377c" stroke-width="1.75"/><circle cx="924.5" cy="85.9" r="5.45" fill="#f3c644"/><path d="M924.5 80.45v1.09M924.5 91.35v-1.09M919.05 85.9h1.09M929.95 85.9h-1.09" stroke="#27377c" stroke-width="0.8" opacity="0.75"/><path d="M958 75.5H963.5V94.5H959" fill="none" stroke="#d4d4d4" stroke-width="1.2"/><path d="M941 96L943 99.5H958.5L957.5 96" fill="#d8d8d8" stroke="#777" stroke-width="0.6"/><rect x="940.8" y="82.6" width="17.8" height="15.4" rx="1" fill="#fff" stroke="#8a8a8a" stroke-width="0.7"/><rect x="940.8" y="82.6" width="17.8" height="4.3" fill="#f8db8e" stroke="#8a8a8a" stroke-width="0.7"/><path d="M945 79.5V84.6M954.2 79.5V84.6" stroke="#8a8a8a" stroke-width="1.6" stroke-linecap="round"/><path d="M945 80V84M954.2 80V84" stroke="#f8db8e" stroke-width="0.7"/><rect x="943.2" y="88.4" width="2.8" height="2.8" fill="#f8dc9a"/><rect x="948.2" y="88.4" width="2.8" height="2.8" fill="#f8dc9a"/><rect x="953.2" y="88.4" width="2.8" height="2.8" fill="#f8dc9a"/><rect x="943.2" y="92.60000000000001" width="2.8" height="2.8" fill="#f8dc9a"/><rect x="948.2" y="92.60000000000001" width="2.8" height="2.8" fill="#f8dc9a"/><rect x="953.2" y="92.60000000000001" width="2.8" height="2.8" fill="#f8dc9a"/><text x="971.3" y="88.16" font-size="4.9" fill="#1d4852" stroke="#1d4852" stroke-width="0.06" font-family="Liberation Sans">Audit Planning</text><g opacity="0.95"><path d="M923.3 149.62Q923.3 147.80 925.58 147.80H929.51L930.70 146.70L931.89 147.80H935.82Q938.10 147.80 938.10 149.62" fill="none" stroke="#e7c144" stroke-width="1.00"/><path d="M923.67 151.09H928.60M928.23 153.19H937.73M933.90 155.65H937.73" stroke="#34448a" stroke-width="0.91" fill="none"/></g><circle cx="924.5" cy="174" r="6.33" fill="#ffffff" stroke="#27377c" stroke-width="1.75"/><path d="M924.5 174V168.55A5.45 5.45 0 0 1 929.95 174.00Z" fill="#f3c644"/><path d="M924.5 168.55v1.09M924.5 179.45v-1.09M919.05 174h1.09M929.95 174h-1.09" stroke="#27377c" stroke-width="0.8" opacity="0.75"/><rect x="944.5" y="164" width="18" height="23.7" fill="#e8e8e8" stroke="#8a8a8a" stroke-width="0.6"/><rect x="942.5" y="162" width="18" height="23.7" fill="#e8e8e8" stroke="#8a8a8a" stroke-width="0.6"/><path d="M940.5 160H955L958.5 163.5V183.7H940.5Z" fill="#f6d88e" stroke="#8a8a8a" stroke-width="0.6"/><rect x="942.8" y="162.4" width="13.4" height="19" fill="#e6e6e6" stroke="#9a9a9a" stroke-width="0.5"/><text x="946.8" y="170" font-size="7" fill="#555" font-family="Liberation Sans">$</text><path d="M945 173.5H954M945 175.8H954M945 178.1H954" stroke="#9a9a9a" stroke-width="0.8"/><text x="971" y="176.66" font-size="4.9" fill="#1d4852" stroke="#1d4852" stroke-width="0.06" font-family="Liberation Sans">Audit Activities</text><circle cx="1010" cy="192.6" r="3.1" fill="#f4fbef" stroke="#9ad77f" stroke-width="0.9"/><path d="M1008.2 192.6H1011.8" stroke="#5fb34a" stroke-width="1.1"/><path d="M1010 190.79999999999998V194.4" stroke="#5fb34a" stroke-width="1.1"/><circle cx="930.6" cy="238.9" r="7.2" fill="#fff" stroke="#35458a" stroke-width="0.7"/><circle cx="930.6" cy="238.9" r="5.9" fill="#2d3b7c"/><circle cx="930.6" cy="238.9" r="4.800000000000001" fill="none" stroke="#fff" stroke-width="0.5" opacity="0.6"/><path d="M930.6 238.9V235.30M930.6 238.9H933.62" stroke="#fff" stroke-width="1.1" fill="none"/><circle cx="924.4" cy="262" r="6.22" fill="#ffffff" stroke="#27377c" stroke-width="1.75"/><path d="M924.4 262V256.65A5.35 5.35 0 1 1 919.05 262.00Z" fill="#f3c644"/><path d="M924.4 256.65v1.07M924.4 267.35v-1.07M919.05 262h1.07M929.75 262h-1.07" stroke="#27377c" stroke-width="0.8" opacity="0.75"/><rect x="938.2" y="268.6" width="2.6" height="6.8" rx="0.5" fill="#e3e3e3" stroke="#8a8a8a" stroke-width="0.6"/><rect x="944.0" y="264.2" width="2.6" height="11.2" rx="0.5" fill="#f6d889" stroke="#8a8a8a" stroke-width="0.6"/><rect x="949.1" y="265.7" width="2.6" height="9.7" rx="0.5" fill="#e3e3e3" stroke="#8a8a8a" stroke-width="0.6"/><rect x="953.4000000000001" y="266" width="2.6" height="9.4" rx="0.5" fill="#f6d889" stroke="#8a8a8a" stroke-width="0.6"/><rect x="957.8000000000001" y="261.4" width="2.6" height="14.0" rx="0.5" fill="#e3e3e3" stroke="#8a8a8a" stroke-width="0.6"/><rect x="962.3000000000001" y="257" width="2.6" height="18.4" rx="0.5" fill="#f6d889" stroke="#8a8a8a" stroke-width="0.6"/><path d="M938.4 262.4L946.3 255.9L954.9 258.6L963.6 250" fill="none" stroke="#777" stroke-width="0.6"/><circle cx="938.4" cy="262.4" r="1.1" fill="#f2c86a" stroke="#8a7a5a" stroke-width="0.4"/><circle cx="946.3" cy="255.9" r="1.1" fill="#f2c86a" stroke="#8a7a5a" stroke-width="0.4"/><circle cx="954.9" cy="258.6" r="1.1" fill="#f2c86a" stroke="#8a7a5a" stroke-width="0.4"/><circle cx="963.6" cy="250" r="1.1" fill="#f2c86a" stroke="#8a7a5a" stroke-width="0.4"/><text x="971.2" y="264.46" font-size="4.9" fill="#1d4852" stroke="#1d4852" stroke-width="0.06" font-family="Liberation Sans">Ratio Analysis</text><circle cx="1008" cy="280.7" r="3.1" fill="#f4fbef" stroke="#9ad77f" stroke-width="0.9"/><path d="M1006.2 280.7H1009.8" stroke="#5fb34a" stroke-width="1.1"/><path d="M1060 232.7H1067L1069.8 235.5V244.5H1060Z" fill="#f6f6f6" stroke="#c8c8c8" stroke-width="0.6"/><circle cx="1061.6" cy="238.4" r="3.5" fill="#f4e51c"/><path d="M1061.6 236V239.4" stroke="#222" stroke-width="1"/><circle cx="1061.6" cy="240.6" r="0.5" fill="#222"/><rect x="1051.5" y="246.1" width="17.3" height="21.6" rx="1.5" fill="#d6d6d6" stroke="#777" stroke-width="0.8"/><rect x="1053.4" y="248.2" width="13.4" height="3.8" fill="#f0f0f0" stroke="#888" stroke-width="0.4"/><rect x="1053.4" y="254.0" width="3.4" height="2.6" fill="#f0f0f0" stroke="#999" stroke-width="0.3"/><rect x="1058.0" y="254.0" width="3.4" height="2.6" fill="#f0f0f0" stroke="#999" stroke-width="0.3"/><rect x="1062.6000000000001" y="254.0" width="3.4" height="2.6" fill="#f0f0f0" stroke="#999" stroke-width="0.3"/><rect x="1053.4" y="258.2" width="3.4" height="2.6" fill="#f0f0f0" stroke="#999" stroke-width="0.3"/><rect x="1058.0" y="258.2" width="3.4" height="2.6" fill="#f0f0f0" stroke="#999" stroke-width="0.3"/><rect x="1062.6000000000001" y="258.2" width="3.4" height="2.6" fill="#f0f0f0" stroke="#999" stroke-width="0.3"/><rect x="1053.4" y="262.4" width="3.4" height="2.6" fill="#f0f0f0" stroke="#999" stroke-width="0.3"/><rect x="1058.0" y="262.4" width="3.4" height="2.6" fill="#f0f0f0" stroke="#999" stroke-width="0.3"/><rect x="1062.6000000000001" y="262.4" width="3.4" height="2.6" fill="#f0f0f0" stroke="#999" stroke-width="0.3"/><ellipse cx="1072.7" cy="272.40" rx="3.8" ry="1.5" fill="#f2d68a" stroke="#a8925a" stroke-width="0.5"/><ellipse cx="1072.7" cy="270.20" rx="3.8" ry="1.5" fill="#f2d68a" stroke="#a8925a" stroke-width="0.5"/><ellipse cx="1072.7" cy="268.00" rx="3.8" ry="1.5" fill="#f2d68a" stroke="#a8925a" stroke-width="0.5"/><ellipse cx="1072.7" cy="265.80" rx="3.8" ry="1.5" fill="#f2d68a" stroke="#a8925a" stroke-width="0.5"/><ellipse cx="1072.7" cy="263.60" rx="3.8" ry="1.5" fill="#f2d68a" stroke="#a8925a" stroke-width="0.5"/><ellipse cx="1064.7" cy="273.50" rx="3.8" ry="1.5" fill="#f2d68a" stroke="#a8925a" stroke-width="0.5"/><ellipse cx="1064.7" cy="271.30" rx="3.8" ry="1.5" fill="#f2d68a" stroke="#a8925a" stroke-width="0.5"/><ellipse cx="1064.7" cy="269.10" rx="3.8" ry="1.5" fill="#f2d68a" stroke="#a8925a" stroke-width="0.5"/><text x="1084.2" y="262.72" font-size="4.52" fill="#1d4852" stroke="#1d4852" stroke-width="0.06" font-family="Liberation Sans">Financial Ratio Analysis Guide</text><g opacity="1"><path d="M923.2 325.40Q923.2 323.53 925.55 323.53H929.58L930.80 322.40L932.02 323.53H936.05Q938.40 323.53 938.40 325.40" fill="none" stroke="#e7c144" stroke-width="1.03"/><path d="M923.58 326.90H928.64M928.27 329.06H938.02M934.08 331.60H938.02" stroke="#34448a" stroke-width="0.94" fill="none"/></g><circle cx="924.5" cy="350.1" r="6.33" fill="#ffffff" stroke="#27377c" stroke-width="1.75"/><path d="M924.5 344.65v1.09M924.5 355.55v-1.09M919.05 350.1h1.09M929.95 350.1h-1.09" stroke="#27377c" stroke-width="0.8" opacity="0.75"/><rect x="939" y="336.2" width="24.6" height="28.2" rx="2" fill="#f8dc9a" stroke="#8a8a8a" stroke-width="0.7"/><path d="M939.5 341.2Q939 336.4 943 336.2H963V341.2Z" fill="#a8a8a8" stroke="#8a8a8a" stroke-width="0.5"/><path d="M941.5 339.6H962" stroke="#e8e8e8" stroke-width="1.2"/><path d="M951.3 345V359.5M947.5 359.8H955M944.5 346.8H958M944.5 346.8L942.2 352.2M944.5 346.8L946.8 352.2M958 346.8L955.7 352.2M958 346.8L960.3 352.2" stroke="#6a6a6a" stroke-width="0.7" fill="none"/><path d="M941.8 352.2A2.7 2.2 0 0 0 947.2 352.2Z M955.3 352.2A2.7 2.2 0 0 0 960.7 352.2Z" fill="#e4e4e4" stroke="#6a6a6a" stroke-width="0.6"/><text x="971.1" y="352.65" font-size="4.86" fill="#1d4852" stroke="#1d4852" stroke-width="0.06" font-family="Liberation Sans">Prepare Trial Balance</text><circle cx="1023.9" cy="368.6" r="3.1" fill="#f4fbef" stroke="#9ad77f" stroke-width="0.9"/><path d="M1022.1 368.6H1025.7" stroke="#5fb34a" stroke-width="1.1"/><circle cx="1079.6" cy="327.3" r="7.2" fill="#fff" stroke="#35458a" stroke-width="0.7"/><circle cx="1079.6" cy="327.3" r="5.9" fill="#2d3b7c"/><circle cx="1079.6" cy="327.3" r="4.800000000000001" fill="none" stroke="#fff" stroke-width="0.5" opacity="0.6"/><path d="M1079.6 327.3V323.70M1079.6 327.3H1082.62" stroke="#fff" stroke-width="1.1" fill="none"/><g transform="translate(1096.3 327) rotate(-45) scale(0.75)"><rect x="-10" y="-3.6" width="10.5" height="7.2" rx="3.6" fill="none" stroke="#c4c4c4" stroke-width="2.13"/><rect x="-0.5" y="-3.6" width="10.5" height="7.2" rx="3.6" fill="none" stroke="#c4c4c4" stroke-width="2.13"/></g><circle cx="1071.8" cy="341" r="6.22" fill="#ffffff" stroke="#27377c" stroke-width="1.75"/><path d="M1071.8 341V335.65A5.35 5.35 0 0 1 1074.94 345.33Z" fill="#f3c644"/><path d="M1071.8 335.65v1.07M1071.8 346.35v-1.07M1066.45 341h1.07M1077.15 341h-1.07" stroke="#27377c" stroke-width="0.8" opacity="0.75"/><path d="M1087.4 347.55L1084.93 343.36A4.50 4.50 0 1 1 1089.88 343.36Z" fill="none" stroke="#262626" stroke-width="2.2" stroke-linejoin="round"/><text x="1099.2" y="342.39" font-size="4.46" fill="#1d4852" stroke="#1d4852" stroke-width="0.06" font-family="Liberation Sans">Test of Transactions</text><circle cx="1144.3" cy="349.6" r="3.1" fill="#f4fbef" stroke="#9ad77f" stroke-width="0.9"/><path d="M1142.5 349.6H1146.1" stroke="#5fb34a" stroke-width="1.1"/><path d="M1140.7 340.6L1178 338.4V342.8Z" fill="#f9dcad"/><rect x="1175.2" y="331.3" width="103.6" height="17.9" rx="8.9" fill="#f9dcad"/><text font-size="4.5" fill="#3f8f5e" font-family="Liberation Sans"><tspan x="1179.7" y="339.4">A selected number of specific transactions are</tspan><tspan x="1179.7" y="344.8">tested to see if controls are performing properly</tspan></text><path d="M930.6 408.2L937.6 415.2L930.6 422.2L923.6 415.2Z" fill="#f4c430"/><text x="930.6" y="418.15" font-size="8.20" font-weight="bold" text-anchor="middle" fill="#1a1a1a" font-family="Liberation Sans">M</text><circle cx="924.4" cy="438.1" r="6.33" fill="#ffffff" stroke="#27377c" stroke-width="1.75"/><path d="M924.4 432.65v1.09M924.4 443.55v-1.09M918.95 438.1h1.09M929.85 438.1h-1.09" stroke="#27377c" stroke-width="0.8" opacity="0.75"/><path d="M942.5 424.2H959.2V451H938V428.7Z" fill="#f9dfa0" stroke="#8a8a8a" stroke-width="0.7"/><path d="M942.5 424.2V428.7H938Z" fill="#e6e6e6" stroke="#8a8a8a" stroke-width="0.5"/><text x="947.5" y="434.2" font-size="7.4" fill="#555" font-family="Liberation Sans">%</text><path d="M940.5 433.3H944.5M940.5 437H951M940.5 440.3H951M940.5 443.7H951M940.5 447H951" stroke="#9a8a6a" stroke-width="0.9"/><rect x="952.2" y="437" width="12.8" height="15.5" rx="1" fill="#9a9a9a" stroke="#6a6a6a" stroke-width="0.6"/><rect x="953.6" y="438.4" width="10" height="2.8" fill="#f0f0f0"/><rect x="953.8" y="442.5" width="2.4" height="2.2" fill="#d8d8d8"/><rect x="957.1999999999999" y="442.5" width="2.4" height="2.2" fill="#d8d8d8"/><rect x="960.5999999999999" y="442.5" width="2.4" height="2.2" fill="#d8d8d8"/><rect x="953.8" y="445.7" width="2.4" height="2.2" fill="#d8d8d8"/><rect x="957.1999999999999" y="445.7" width="2.4" height="2.2" fill="#d8d8d8"/><rect x="960.5999999999999" y="445.7" width="2.4" height="2.2" fill="#d8d8d8"/><rect x="953.8" y="448.9" width="2.4" height="2.2" fill="#d8d8d8"/><rect x="957.1999999999999" y="448.9" width="2.4" height="2.2" fill="#d8d8d8"/><rect x="960.5999999999999" y="448.9" width="2.4" height="2.2" fill="#d8d8d8"/><text x="971" y="440.94" font-size="4.84" fill="#1d4852" stroke="#1d4852" stroke-width="0.06" font-family="Liberation Sans">Subsequent Events Review</text><g opacity="1"><path d="M923.2 514.32Q923.2 512.50 925.48 512.50H929.41L930.60 511.40L931.79 512.50H935.72Q938.00 512.50 938.00 514.32" fill="none" stroke="#e7c144" stroke-width="1.00"/><path d="M923.57 515.79H928.50M928.13 517.89H937.63M933.80 520.35H937.63" stroke="#34448a" stroke-width="0.91" fill="none"/></g><circle cx="924.4" cy="538.4" r="6.33" fill="#ffffff" stroke="#27377c" stroke-width="1.75"/><path d="M924.4 532.95v1.09M924.4 543.85v-1.09M918.95 538.4h1.09M929.85 538.4h-1.09" stroke="#27377c" stroke-width="0.8" opacity="0.75"/><path d="M938.3 538L951.4 529L964.6 538V552.8H938.3Z" fill="#e2e2e2" stroke="#777" stroke-width="0.7"/><path d="M941.2 524.6H957.5L961.3 528.4V545H941.2Z" fill="#f8d98e" stroke="#8a8a8a" stroke-width="0.6"/><rect x="944" y="527.5" width="14.4" height="14" fill="#f2f2f2" stroke="#9a9a9a" stroke-width="0.5"/><path d="M946.5 531.5H956M946.5 534H956M946.5 536.5H956" stroke="#8a8a8a" stroke-width="0.7"/><path d="M938.3 538L951.4 546L964.6 538V552.8H938.3Z" fill="#e6e6e6" stroke="#777" stroke-width="0.7"/><path d="M938.3 552.8L951.4 544.5L964.6 552.8" fill="none" stroke="#777" stroke-width="0.7"/><text x="970.9" y="540.85" font-size="4.88" fill="#1d4852" stroke="#1d4852" stroke-width="0.06" font-family="Liberation Sans">Post Journal Entries</text><circle cx="1021" cy="557" r="3.1" fill="#f4fbef" stroke="#9ad77f" stroke-width="0.9"/><path d="M1019.2 557H1022.8" stroke="#5fb34a" stroke-width="1.1"/><circle cx="1076.7" cy="503.1" r="6.8" fill="#fff" stroke="#35458a" stroke-width="0.7"/><circle cx="1076.7" cy="503.1" r="5.5" fill="#2d3b7c"/><circle cx="1076.7" cy="503.1" r="4.4" fill="none" stroke="#fff" stroke-width="0.5" opacity="0.6"/><path d="M1076.7 503.1V499.70M1076.7 503.1H1079.56" stroke="#fff" stroke-width="1.1" fill="none"/><circle cx="1069" cy="517" r="6.12" fill="#ffffff" stroke="#27377c" stroke-width="1.75"/><path d="M1069 511.75v1.05M1069 522.25v-1.05M1063.75 517h1.05M1074.25 517h-1.05" stroke="#27377c" stroke-width="0.8" opacity="0.75"/><text x="1081" y="519.01" font-size="4.51" fill="#1d4852" stroke="#1d4852" stroke-width="0.06" font-family="Liberation Sans">Post Adjusting Journal</text><circle cx="1076.7" cy="546.3" r="6.8" fill="#fff" stroke="#35458a" stroke-width="0.7"/><circle cx="1076.7" cy="546.3" r="5.5" fill="#2d3b7c"/><circle cx="1076.7" cy="546.3" r="4.4" fill="none" stroke="#fff" stroke-width="0.5" opacity="0.6"/><path d="M1076.7 546.3V542.90M1076.7 546.3H1079.56" stroke="#fff" stroke-width="1.1" fill="none"/><circle cx="1069" cy="560.2" r="6.12" fill="#ffffff" stroke="#27377c" stroke-width="1.75"/><path d="M1069 554.95v1.05M1069 565.45v-1.05M1063.75 560.2h1.05M1074.25 560.2h-1.05" stroke="#27377c" stroke-width="0.8" opacity="0.75"/><text x="1081" y="562.21" font-size="4.49" fill="#1d4852" stroke="#1d4852" stroke-width="0.06" font-family="Liberation Sans">Post Reclassification</text><path d="M1133.5 517.5C1150 521 1150 558 1131 560.2" fill="none" stroke="#7fe0c4" stroke-width="1"/><circle cx="1131.5" cy="516.2" r="3.3" fill="#6fd9ba"/><path d="M1124.9 560.2L1131.8 555.7L1130.6 560.2L1131.8 564.8Z" fill="#6fd9ba"/></svg>
</div></body></html>
